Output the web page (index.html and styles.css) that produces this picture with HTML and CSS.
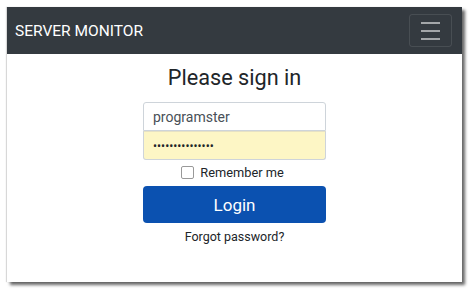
FILE: index.html
```html
<!DOCTYPE html>
<html lang="en">
<head>
  <meta charset="UTF-8">
  <meta name="viewport" content="width=device-width, initial-scale=1.0">
  <title>Server Monitor</title>
  <link rel="stylesheet" href="styles.css">
</head>
<body>
 <div class="window">
   <nav class="navbar">
     <span class="brand">SERVER MONITOR</span>
     <button class="toggler" type="button">
       <span class="bar"></span>
       <span class="bar"></span>
       <span class="bar"></span>
     </button>
   </nav>
   <form class="signin">
     <h1 class="title">Please sign in</h1>
     <input class="field top" type="text" value="programster">
     <input class="field bottom" type="password" value="programster1234">
     <label class="remember"><span class="box"></span>Remember me</label>
     <button class="login" type="button">Login</button>
     <a class="forgot" href="#">Forgot password?</a>
   </form>
 </div>
</body>
</html>
```
FILE: styles.css
```css
html, body{
  height: 100%;
}
body{
  margin: 0;
  background: #fff;
  font-family: Roboto, "Liberation Sans", sans-serif;
  color: #212529;
  overflow: hidden;
}
.window{
  margin: 7px 0 0 7px;
  width: 455px;
  height: 275px;
  background: #fff;
  box-shadow: 3px 3px 3px rgba(0,0,0,0.6), -1px 0 1px rgba(0,0,0,0.15);
}
.navbar{
  height: 47px;
  background: #343a40;
  display: flex;
  align-items: center;
  justify-content: space-between;
  padding: 0 10px 0 8px;
}
.brand{
  color: #fff;
  font-size: 15.5px;
}
.toggler{
  width: 43px;
  height: 33px;
  background: transparent;
  border: 1px solid rgba(255,255,255,0.1);
  border-radius: 3px;
  display: flex;
  flex-direction: column;
  align-items: center;
  justify-content: center;
  gap: 6px;
  padding: 0;
}
.bar{
  display: block;
  width: 19px;
  height: 2px;
  background: rgba(255,255,255,0.55);
}
.signin{
  width: 183px;
  margin: 0 auto;
  display: flex;
  flex-direction: column;
  align-items: center;
}
.title{
  font-size: 21.7px;
  font-weight: 400;
  margin: 11px 0 11px;
  line-height: 26px;
}
.field{
  box-sizing: border-box;
  width: 100%;
  height: 29px;
  margin: 0;
  padding: 0 9px;
  font-family: inherit;
  font-size: 14px;
  color: #495057;
  border: 1px solid #ced4da;
  background: #fff;
  outline: none;
}
.top{
  border-radius: 3px 3px 0 0;
}
.bottom{
  border-radius: 0 0 3px 3px;
  background: #fdf6c5;
  border-top-color: #e6e1c4;
  font-size: 12px;
  color: #212529;
}
.remember{
  display: flex;
  align-items: center;
  font-size: 12.8px;
  margin: 5px 4px 6px 0;
  height: 15px;
}
.box{
  width: 11px;
  height: 11px;
  border: 1px solid #999;
  border-radius: 2px;
  margin-right: 6px;
}
.login{
  width: 100%;
  height: 37px;
  border: none;
  border-radius: 4px;
  background: #0b51b0;
  color: #fff;
  font-family: inherit;
  font-size: 17px;
}
.forgot{
  margin-top: 6px;
  font-size: 12.5px;
  color: #212529;
  text-decoration: none;
}
```
